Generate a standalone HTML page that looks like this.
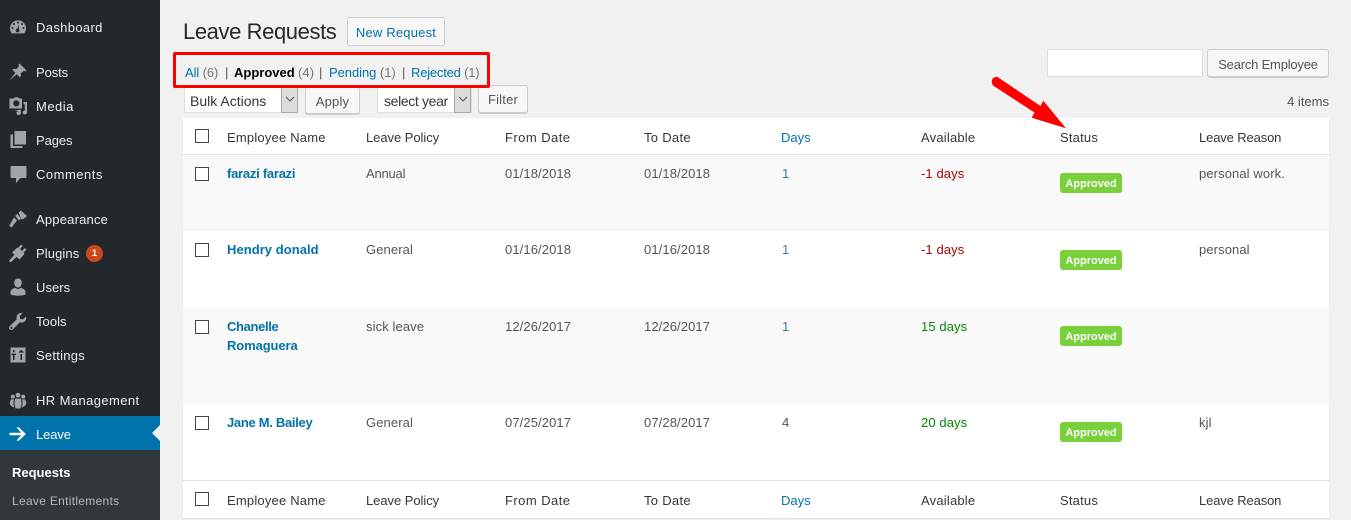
<!DOCTYPE html>
<html><head><meta charset="utf-8"><title>Leave Requests</title>
<style>
html,body{margin:0;padding:0}
body{position:relative;width:1351px;height:520px;overflow:hidden;background:#f1f1f1;font:13px/20px "Liberation Sans",sans-serif;color:#555}
.t{position:absolute;white-space:nowrap;letter-spacing:.1px;margin-top:1px}
.b{position:absolute;box-sizing:border-box}
#side{position:absolute;left:0;top:0;width:160px;height:520px;background:#23282d}
#side .t{left:36px;color:#eee;letter-spacing:.25px}
#side svg{position:absolute;left:8px;width:20px;height:20px;fill:#a0a5aa}
a{color:#0073aa;text-decoration:none}
.h{color:#32373c}
.l{color:#0073aa;font-weight:bold;letter-spacing:-.25px}
.cb{position:absolute;left:195px;width:14px;height:14px;box-sizing:border-box;border:1.5px solid #444;background:#fff}
.bd{position:absolute;left:1060px;width:62px;height:20px;background:#7ad03a;border-radius:3px;color:#fff;font:bold 11px/22px "Liberation Sans",sans-serif;text-align:center}
.btn{position:absolute;box-sizing:border-box;background:#f7f7f7;border:1px solid #ccc;border-radius:3px;box-shadow:0 1px 0 #ccc;color:#555;text-align:center;letter-spacing:.2px}
.r{color:#a00}.g{color:#080}
.lp{letter-spacing:-.05px}.fd{letter-spacing:.45px}.td{letter-spacing:.3px}.lr{letter-spacing:-.13px}.dy{letter-spacing:0}.hn{letter-spacing:.2px}
</style></head><body>
<div id="side">
<svg style="top:17px" viewBox="0 0 20 20"><path d="M3.8 16.4A8 8 0 1 1 16.2 16.4ZM10 4.5a1 1 0 1 0 .01 0ZM6 6a1 1 0 1 0 .01 0ZM14 6a1 1 0 1 0 .01 0ZM4.5 10a1 1 0 1 0 .01 0ZM15.5 10a1 1 0 1 0 .01 0ZM10.8 7.5 9.3 11.6a1.9 1.9 0 1 0 1.6.5Z" fill-rule="evenodd"/></svg>
<div class="t" style="top:17px;letter-spacing:.35px">Dashboard</div>
<svg style="top:62px" viewBox="0 0 20 20"><path d="M11.5 1.5 18.5 8.5 17.2 9.5 15.8 8.8 12.6 11.5C13.3 13 13 14.5 12 15.5L8.8 12.3 1 18.6 7.4 10.9 4.3 7.8C5.4 6.8 7 6.5 8.3 7.2L11.1 4 10.4 2.7Z"/></svg>
<div class="t" style="top:62px;letter-spacing:-.1px">Posts</div>
<svg style="top:96px" viewBox="0 0 20 20"><path d="M3 2.5H6L7 1.2H10L11 2.5H14V12.5H1.5V2.5ZM8.3 4.2A3.1 3.1 0 1 0 8.31 4.2ZM15.5 6H19V16.3A2.2 1.9 0 1 1 16.8 14.6V8.4H15.5ZM7 14.5 12.8 13.5V16.6A2.2 1.9 0 1 1 10.7 15.2Z" fill-rule="evenodd"/></svg>
<div class="t" style="top:96px;letter-spacing:.5px">Media</div>
<svg style="top:130px" viewBox="0 0 20 20"><path d="M6.5 1H18V14.5H6.5ZM2.5 4.5H5V16H14.5V18H2.5Z"/></svg>
<div class="t" style="top:130px;letter-spacing:-.1px">Pages</div>
<svg style="top:164px" viewBox="0 0 20 20"><path d="M3.5 2H17.5Q18.5 2 18.5 3V13Q18.5 14 17.5 14H12.5L8 19V14H3.5Q2.5 14 2.5 13V3Q2.5 2 3.5 2Z"/></svg>
<div class="t" style="top:164px;letter-spacing:.5px">Comments</div>
<svg style="top:209px" viewBox="0 0 20 20"><path d="M10.5 3.5 13 1.5 19 7 15.5 10 13.5 10.5ZM9.3 4.8 13 9.5 10.8 11.5 7.3 7ZM6 8.3 9 11.5 3.5 18.6 1.2 16.8Z"/></svg>
<div class="t" style="top:209px;letter-spacing:.2px">Appearance</div>
<svg style="top:243px" viewBox="0 0 20 20"><path d="M13 1.5 14.8 3 12 6 14 8 16.8 5 18.5 6.7 15.6 9.8 16.5 11 11.5 16.5 8.5 14 3.2 19 1.5 19 1.5 17 6.5 11.8 4 9.5 9.5 4.5 10.2 4.7Z"/></svg>
<div class="t" style="top:243px;letter-spacing:.1px">Plugins</div>
<div class="b" style="left:86px;top:245px;width:17px;height:17px;border-radius:50%;background:#ca4a1f;color:#fff;font:bold 9px/17px 'Liberation Sans',sans-serif;text-align:center">1</div>
<svg style="top:277px" viewBox="0 0 20 20"><path d="M10 1.5C12.4 1.5 13.8 3.4 13.8 5.8S12.4 10.5 10 10.5 6.2 8.2 6.2 5.8 7.6 1.5 10 1.5ZM2.5 15.5C2.5 12.5 5 11.5 7.5 10.8 8.3 11.6 9 12 10 12S11.7 11.6 12.5 10.8C15 11.5 17.5 12.5 17.5 15.5V17.5C15 18.4 12.5 18.7 10 18.7S5 18.4 2.5 17.5Z"/></svg>
<div class="t" style="top:277px;letter-spacing:.05px">Users</div>
<svg style="top:311px" viewBox="0 0 20 20"><path d="M17.8 5.5C18.5 7.5 18 9.5 16.3 10.8 14.9 11.8 13.2 11.9 11.8 11.3L5 18.2C4 19.2 2.4 19.2 1.6 18.3 .8 17.4.9 15.9 1.9 15L8.8 8.2C8.2 6.7 8.4 5 9.5 3.7 10.8 2.1 12.8 1.6 14.6 2.2L11.7 5.1 12.2 7.9 15 8.4ZM3.5 15.7A1 1 0 1 0 3.51 15.7Z" fill-rule="evenodd"/></svg>
<div class="t" style="top:311px;letter-spacing:.05px">Tools</div>
<svg style="top:345px" viewBox="0 0 20 20"><path d="M2.5 2.5H17.5V17.5H2.5ZM5 10V15H6.5V10H8V8.6H3.6V10ZM6.5 7.2V5H5V7.2ZM12.5 5V6.2H11V7.6H15.5V6.2H14V5ZM12.5 9V15H14V9Z" fill-rule="evenodd"/></svg>
<div class="t" style="top:345px">Settings</div>
<svg style="top:390px" viewBox="0 0 20 20"><circle cx="10" cy="5.2" r="2.4"/><circle cx="4.8" cy="6.6" r="2"/><circle cx="15.2" cy="6.6" r="2"/><path d="M7 8.6H13L13.6 14.5 12.3 18.5H7.7L6.4 14.5ZM2.8 9.4H5.8L5.4 14.5 6.4 17.5C4 17 2 15.5 1.6 13ZM14.2 9.4H17.2L18.4 13C18 15.5 16 17 13.6 17.5L14.6 14.5Z"/></svg>
<div class="t" style="top:390px;letter-spacing:.4px">HR Management</div>
<div class="b" style="left:0;top:416px;width:160px;height:34px;background:#0073aa"></div>
<svg style="top:424px;fill:#fff" viewBox="0 0 20 20"><path d="M1.5 8.7H13.2L8.4 3.4 10.9 3.4 17.9 10 10.9 16.6 8.4 16.6 13.2 11.3H1.5Z"/></svg>
<div class="t" style="top:424px;color:#fff;letter-spacing:-.1px">Leave</div>
<div class="b" style="left:152px;top:425px;width:0;height:0;border:8px solid transparent;border-right-color:#f1f1f1;border-left:0"></div>
<div class="b" style="left:0;top:450px;width:160px;height:70px;background:#32373c"></div>
<div class="t" style="top:462px;color:#fff;font-weight:bold;letter-spacing:0;margin-left:-24px">Requests</div>
<div class="t" style="top:490px;color:#b4b9be;font-size:12px;margin-left:-24px;letter-spacing:.3px">Leave Entitlements</div>
</div>

<div class="t" style="left:183px;top:19px;font-size:22px;line-height:24px;color:#23282d;letter-spacing:-.4px">Leave Requests</div>
<div class="btn" style="left:347px;top:17px;width:98px;height:29px;line-height:29px;color:#0073aa;box-shadow:none">New Request</div>

<div class="t" style="left:185px;top:62px;letter-spacing:-.1px"><a href="#">All</a> <span style="color:#72777c">(6)</span></div>
<div class="t" style="left:225px;top:62px;color:#555">|</div>
<div class="t" style="left:234px;top:62px;color:#000;font-weight:bold;letter-spacing:0">Approved</div>
<div class="t" style="left:298px;top:62px;color:#72777c">(4)</div>
<div class="t" style="left:319px;top:62px">|</div>
<div class="t" style="left:329px;top:62px;letter-spacing:-.05px"><a href="#">Pending</a> <span style="color:#72777c">(1)</span></div>
<div class="t" style="left:402px;top:62px">|</div>
<div class="t" style="left:411px;top:62px;letter-spacing:-.2px"><a href="#">Rejected</a> <span style="color:#72777c">(1)</span></div>

<div class="b" style="left:184px;top:85px;width:114px;height:28px;background:#fff;border:1px solid #ddd"></div>
<div class="b" style="left:281px;top:85px;width:17px;height:28px;background:#dcdcdc;border:1px solid #aaa"></div>
<svg class="b" style="left:285px;top:96px" width="10" height="6" viewBox="0 0 10 6"><path d="M1 1 5 5 9 1" fill="none" stroke="#555" stroke-width="1"/></svg>
<div class="t" style="left:190px;top:90px;color:#32373c;font-size:14px;letter-spacing:0">Bulk Actions</div>
<div class="btn" style="left:305px;top:87px;width:55px;height:27px;line-height:28px">Apply</div>
<div class="b" style="left:377px;top:85px;width:95px;height:28px;background:#fff;border:1px solid #ddd"></div>
<div class="b" style="left:454px;top:85px;width:17px;height:28px;background:#dcdcdc;border:1px solid #aaa"></div>
<svg class="b" style="left:458px;top:96px" width="10" height="6" viewBox="0 0 10 6"><path d="M1 1 5 5 9 1" fill="none" stroke="#555" stroke-width="1"/></svg>
<div class="t" style="left:384px;top:90px;color:#32373c;font-size:14px;letter-spacing:-.35px">select year</div>
<div class="btn" style="left:478px;top:85px;width:50px;height:28px;line-height:28px">Filter</div>

<div class="b" style="left:173px;top:52px;width:317px;height:36px;border:3px solid #f00;border-radius:2px"></div>

<div class="b" style="left:1047px;top:49px;width:156px;height:28px;background:#fff;border:1px solid #ddd"></div>
<div class="btn" style="left:1207px;top:49px;width:122px;height:28px;line-height:29px;letter-spacing:-.2px">Search Employee</div>
<div class="t" style="right:22px;top:91px;letter-spacing:0">4 items</div>

<div class="b" style="left:183px;top:118px;width:1146px;height:400px;background:#fff;box-shadow:0 1px 1px rgba(0,0,0,.08)"></div>
<div class="b" style="left:183px;top:154px;width:1146px;height:1px;background:#e1e1e1"></div>
<div class="b" style="left:183px;top:155px;width:1146px;height:76px;background:#f9f9f9"></div>
<div class="b" style="left:183px;top:308px;width:1146px;height:96px;background:#f9f9f9"></div>
<div class="b" style="left:183px;top:480px;width:1146px;height:1px;background:#e1e1e1"></div>

<div class="cb" style="top:129px"></div><div class="cb" style="top:167px"></div><div class="cb" style="top:243px"></div><div class="cb" style="top:320px"></div><div class="cb" style="top:416px"></div><div class="cb" style="top:492px"></div>

<div class="t h hn" style="left:227px;top:127px">Employee Name</div>
<div class="t h lp" style="left:366px;top:127px">Leave Policy</div>
<div class="t h fd" style="left:505px;top:127px">From Date</div>
<div class="t h td" style="left:644px;top:127px">To Date</div>
<div class="t dy" style="left:781px;top:127px"><a href="#">Days</a></div>
<div class="t h hn" style="left:921px;top:127px">Available</div>
<div class="t h hn" style="left:1060px;top:127px">Status</div>
<div class="t h lr" style="left:1199px;top:127px">Leave Reason</div>

<div class="t l" style="left:227px;top:163px">farazi farazi</div>
<div class="t" style="left:366px;top:163px;letter-spacing:-.2px">Annual</div>
<div class="t" style="left:505px;top:163px">01/18/2018</div>
<div class="t" style="left:644px;top:163px">01/18/2018</div>
<div class="t" style="left:782px;top:163px;color:#41789c">1</div>
<div class="t r" style="left:921px;top:163px">-1 days</div>
<div class="bd" style="top:173px">Approved</div>
<div class="t" style="left:1199px;top:163px">personal work.</div>

<div class="t l" style="left:227px;top:239px;letter-spacing:.05px">Hendry donald</div>
<div class="t" style="left:366px;top:239px">General</div>
<div class="t" style="left:505px;top:239px">01/16/2018</div>
<div class="t" style="left:644px;top:239px">01/16/2018</div>
<div class="t" style="left:782px;top:239px;color:#41789c">1</div>
<div class="t r" style="left:921px;top:239px">-1 days</div>
<div class="bd" style="top:250px">Approved</div>
<div class="t" style="left:1199px;top:239px">personal</div>

<div class="t l" style="left:227px;top:316px;letter-spacing:-.35px">Chanelle</div>
<div class="t l" style="left:227px;top:335px;letter-spacing:-.1px">Romaguera</div>
<div class="t" style="left:366px;top:316px">sick leave</div>
<div class="t" style="left:505px;top:316px">12/26/2017</div>
<div class="t" style="left:644px;top:316px">12/26/2017</div>
<div class="t" style="left:782px;top:316px;color:#41789c">1</div>
<div class="t g" style="left:921px;top:316px">15 days</div>
<div class="bd" style="top:326px">Approved</div>

<div class="t l" style="left:227px;top:412px;letter-spacing:-.3px">Jane M. Bailey</div>
<div class="t" style="left:366px;top:412px">General</div>
<div class="t" style="left:505px;top:412px">07/25/2017</div>
<div class="t" style="left:644px;top:412px">07/28/2017</div>
<div class="t" style="left:782px;top:412px">4</div>
<div class="t g" style="left:921px;top:412px">20 days</div>
<div class="bd" style="top:422px">Approved</div>
<div class="t" style="left:1199px;top:412px">kjl</div>

<div class="t h hn" style="left:227px;top:490px">Employee Name</div>
<div class="t h lp" style="left:366px;top:490px">Leave Policy</div>
<div class="t h fd" style="left:505px;top:490px">From Date</div>
<div class="t h td" style="left:644px;top:490px">To Date</div>
<div class="t dy" style="left:781px;top:490px"><a href="#">Days</a></div>
<div class="t h hn" style="left:921px;top:490px">Available</div>
<div class="t h hn" style="left:1060px;top:490px">Status</div>
<div class="t h lr" style="left:1199px;top:490px">Leave Reason</div>

<svg class="b" style="left:985px;top:70px" width="90" height="65" viewBox="985 70 90 65"><path d="M997.5 77 1040.5 106 1043.3 100.7 1066 128.3 1031.7 117.7 1034.5 112.5 993 85.5Q990 80.5 994 77.5Q996 76.3 997.5 77Z" fill="#f00"/></svg>
</body></html>
